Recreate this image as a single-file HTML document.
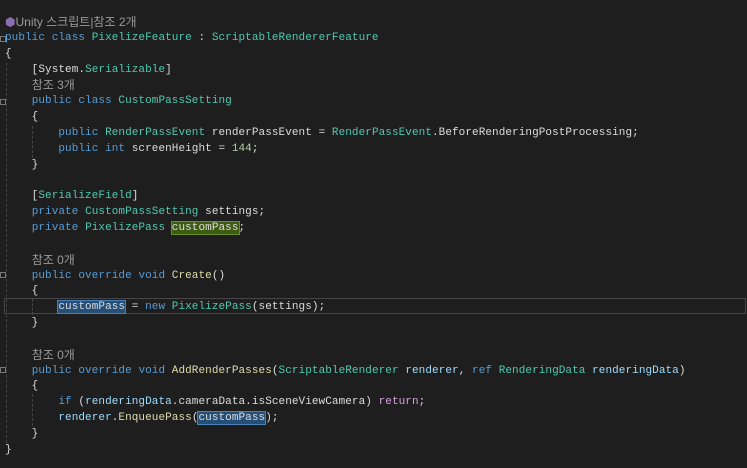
<!DOCTYPE html>
<html><head><meta charset="utf-8"><style>
body{margin:0;background:#1e1e1e;width:747px;height:468px;overflow:hidden;position:relative}
.c{position:absolute;left:5px;top:15px;font-family:"Liberation Mono","Noto Sans CJK KR",monospace;font-size:11px;letter-spacing:0.07px;line-height:15.85px;color:#dcdcdc;white-space:pre}
.k{color:#569cd6}.t{color:#4ec9b0}.m{color:#dcdcaa}.p{color:#9cdcfe}.n{color:#b5cea8}.r{color:#d8a0df}
.l{color:#9a9a9a;font-family:"Liberation Sans","Noto Sans CJK KR",sans-serif;font-size:12px;letter-spacing:0;display:inline-block;height:15.85px;line-height:15.85px;vertical-align:top}
.g{background:#3d5c13;outline:1px solid #6a8f2a}
.b{background:#264f78;outline:1px solid #4a7fb8}
.guide{position:absolute;width:0;border-left:1px dashed #444}
.cur{position:absolute;left:4px;top:298px;width:742px;height:16px;border:1px solid #464646;box-sizing:border-box}
.box{position:absolute;left:0;width:6px;height:6px;border:1px solid #777;box-sizing:border-box}
</style></head><body>
<div class="cur"></div>
<div class="guide" style="left:6px;top:63px;height:380px"></div>
<div class="guide" style="left:32px;top:126px;height:32px"></div>
<div class="guide" style="left:32px;top:299px;height:16px"></div>
<div class="guide" style="left:32px;top:394px;height:32px"></div>
<div class="box" style="top:36px"></div>
<div class="box" style="top:99px"></div>
<div class="box" style="top:272px"></div>
<div class="box" style="top:367px"></div>
<div class="c"><span class="l"><span style="color:#8a6fb0">⬢</span>Unity 스크립트|참조 2개</span>
<span class="k">public</span> <span class="k">class</span> <span class="t">PixelizeFeature</span> : <span class="t">ScriptableRendererFeature</span>
{
    [System.<span class="t">Serializable</span>]
    <span class="l">참조 3개</span>
    <span class="k">public</span> <span class="k">class</span> <span class="t">CustomPassSetting</span>
    {
        <span class="k">public</span> <span class="t">RenderPassEvent</span> renderPassEvent = <span class="t">RenderPassEvent</span>.BeforeRenderingPostProcessing;
        <span class="k">public</span> <span class="k">int</span> screenHeight = <span class="n">144</span>;
    }

    [<span class="t">SerializeField</span>]
    <span class="k">private</span> <span class="t">CustomPassSetting</span> settings;
    <span class="k">private</span> <span class="t">PixelizePass</span> <span class="g">customPass</span>;

    <span class="l">참조 0개</span>
    <span class="k">public</span> <span class="k">override</span> <span class="k">void</span> <span class="m">Create</span>()
    {
        <span class="b">customPass</span> = <span class="k">new</span> <span class="t">PixelizePass</span>(settings);
    }

    <span class="l">참조 0개</span>
    <span class="k">public</span> <span class="k">override</span> <span class="k">void</span> <span class="m">AddRenderPasses</span>(<span class="t">ScriptableRenderer</span> <span class="p">renderer</span>, <span class="k">ref</span> <span class="t">RenderingData</span> <span class="p">renderingData</span>)
    {
        <span class="k">if</span> (<span class="p">renderingData</span>.cameraData.isSceneViewCamera) <span class="r">return</span>;
        <span class="p">renderer</span>.<span class="m">EnqueuePass</span>(<span class="b">customPass</span>);
    }
}</div>
</body></html>
